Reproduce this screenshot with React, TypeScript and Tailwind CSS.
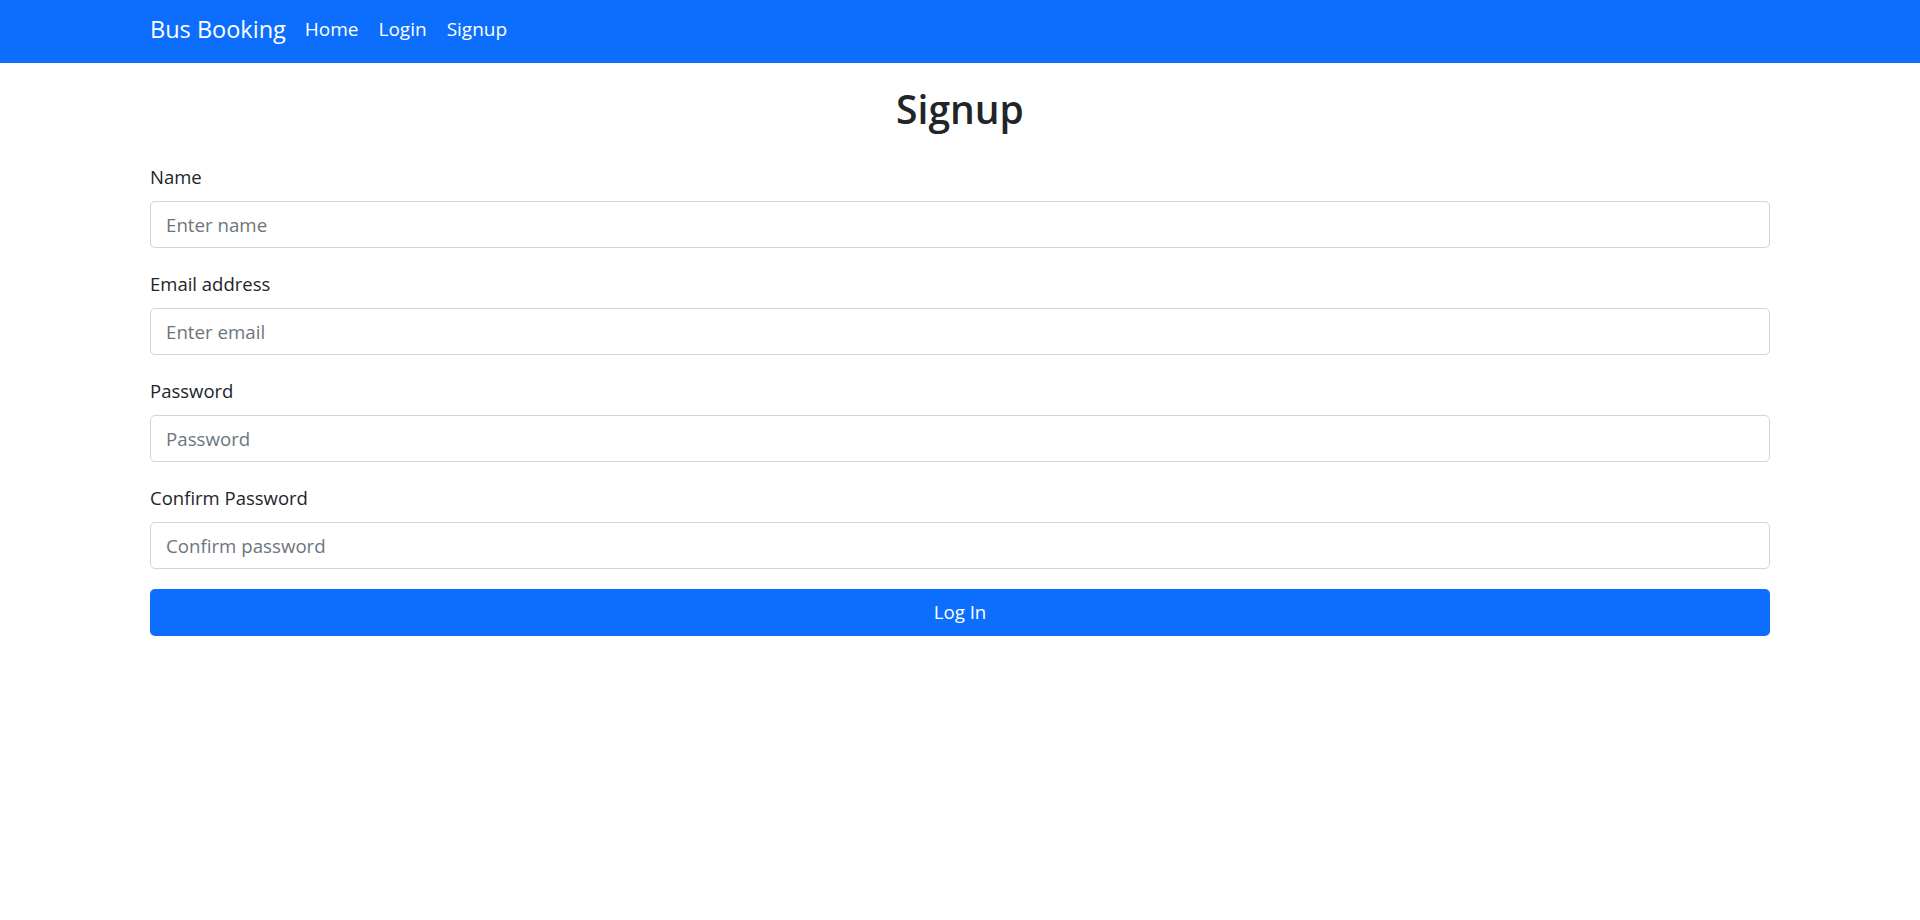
import React from 'react';

const fields = [
  { id: 'name', label: 'Name', type: 'text', placeholder: 'Enter name' },
  { id: 'email', label: 'Email address', type: 'email', placeholder: 'Enter email' },
  { id: 'password', label: 'Password', type: 'password', placeholder: 'Password' },
  { id: 'confirm', label: 'Confirm Password', type: 'password', placeholder: 'Confirm password' }
];

export default function App() {
  return (
    <div
      className="min-h-screen bg-white text-[#212529]"
      style={{ fontFamily: '"Open Sans", "Noto Sans", sans-serif' }}
    >
      {/* Navbar */}
      <nav className="h-[63px] bg-[#0d6efd]">
        <div className="mx-auto flex h-full w-[1620px] items-center pb-[4px]">
          <a href="#" className="mr-[19px] text-[23.5px] text-white">
            Bus Booking
          </a>
          <div className="flex items-center gap-[20px] text-[19px] text-white">
            <a href="#">Home</a>
            <a href="#">Login</a>
            <a href="#">Signup</a>
          </div>
        </div>
      </nav>

      {/* Form */}
      <div className="mx-auto w-[1620px]">
        <h1 className="mt-[22px] mb-[30px] text-center text-[39px] leading-[47px] font-semibold">
          Signup
        </h1>
        <form onSubmit={(e) => e.preventDefault()}>
          {fields.map((f) => (
            <div key={f.id} className="mb-[21px]">
              <label htmlFor={f.id} className="mb-[10px] block text-[18.5px] leading-[29px]">
                {f.label}
              </label>
              <input
                id={f.id}
                type={f.type}
                placeholder={f.placeholder}
                className="block h-[47px] w-full rounded-[5px] border border-[#ced4da] px-[15px] text-[18.7px] placeholder:text-[#6c757d] focus:outline-none"
              />
            </div>
          ))}
          <button
            type="submit"
            className="-mt-[1px] h-[47px] w-full rounded-[5px] bg-[#0d6efd] text-[18.7px] text-white"
          >
            Log In
          </button>
        </form>
      </div>
    </div>
  );
}
